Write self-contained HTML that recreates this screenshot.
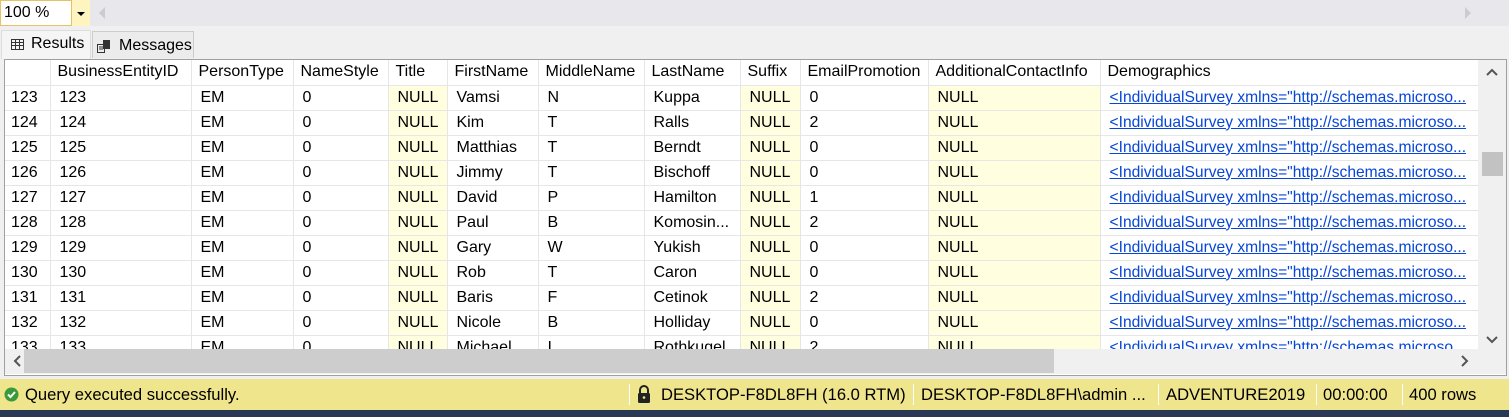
<!DOCTYPE html>
<html><head><meta charset="utf-8"><style>
*{margin:0;padding:0;box-sizing:border-box}
body{width:1509px;height:417px;overflow:hidden;background:#f0f0f0;font-family:"Liberation Sans",sans-serif;font-size:16px;color:#000;position:relative}
.abs{position:absolute}
.top{left:0;top:0;width:1509px;height:26px;background:#e8e8ec}
.combo{left:0;top:0;width:72px;height:26px;background:#fff;border:1px solid #e5c365;padding:3px 0 0 3px;font-size:16px}
.dd{left:72px;top:0;width:18px;height:26px;background:#fdf4bf}
.tab{top:31px;height:27px;border:1px solid #ccc;border-bottom:none;padding:3px 0 0 0;font-size:16px}
.grid{left:4px;top:59px;width:1503px;height:317px;border:1px solid #a0a0a0;background:#fff;overflow:hidden}
table{border-collapse:collapse;position:absolute;left:0;top:0;table-layout:fixed}
td{height:25px;line-height:20px;border-right:1px solid #e6e6e6;border-bottom:1px solid #e6e6e6;padding:1px 0 1px 9px;white-space:nowrap;overflow:hidden;font-size:16px}
td:first-child{padding-left:6px}
tr.h td{padding:1px 0 1px 7px}
.y{background:#ffffe0}
.l{color:#0645d8;text-decoration:underline;text-decoration-color:#0645d8;font-size:15.6px}
.vs{left:1473px;top:0;width:28px;height:289px;background:#f0f0f0}
.hs{left:0;top:289px;width:1501px;height:25px;background:#f0f0f0}
.status{left:0;top:379px;width:1509px;height:31px;background:#efe58c;font-size:16.6px}
.status span{position:absolute;top:6px}
.sep{position:absolute;top:5px;width:1px;height:21px;background:#fff}
.navy{left:0;top:410px;width:1509px;height:7px;background:#293955}
</style></head><body>
<div class="abs top"></div>
<div class="abs combo">100 %</div>
<div class="abs dd"><svg width="18" height="26"><path d="M5 12h8l-4 4z" fill="#000"/></svg></div>
<svg class="abs" style="left:97px;top:6px" width="10" height="14"><path d="M8 1L2 7l6 6z" fill="#ccc"/></svg>
<svg class="abs" style="left:1463px;top:6px" width="10" height="14"><path d="M2 1l6 6-6 6z" fill="#ccc"/></svg>
<div class="abs tab" style="left:1px;width:90px;background:#f5f5f5;top:30px;height:29px;border-color:#ddd">
<svg style="position:absolute;left:9px;top:8px" width="14" height="12"><rect x="0.5" y="0.5" width="12" height="10" fill="none" stroke="#333"/><path d="M0 3.5h13M0 6.5h13M4.5 0v11M8.5 0v11" stroke="#333"/></svg>
<span style="position:absolute;left:29px;top:4px">Results</span></div>
<div class="abs tab" style="left:92px;width:102px;background:#ececec">
<svg style="position:absolute;left:4px;top:8px" width="14" height="13"><rect x="0.5" y="4.5" width="7" height="8" fill="none" stroke="#333"/><rect x="6" y="0" width="7" height="9" fill="#333"/><path d="M2 7h4M2 9h4" stroke="#333"/></svg>
<span style="position:absolute;left:26px;top:5px">Messages</span></div>
<div class="abs grid">
<table>
<colgroup><col style="width:45px"><col style="width:141px"><col style="width:102px"><col style="width:95px"><col style="width:59px"><col style="width:91px"><col style="width:106px"><col style="width:96px"><col style="width:60px"><col style="width:128px"><col style="width:172px"><col style="width:378px"></colgroup>
<tr class="h"><td></td><td>BusinessEntityID</td><td>PersonType</td><td>NameStyle</td><td>Title</td><td>FirstName</td><td>MiddleName</td><td>LastName</td><td>Suffix</td><td>EmailPromotion</td><td>AdditionalContactInfo</td><td>Demographics</td></tr>
<tr><td>123</td><td>123</td><td>EM</td><td>0</td><td class="y">NULL</td><td>Vamsi</td><td>N</td><td>Kuppa</td><td class="y">NULL</td><td>0</td><td class="y">NULL</td><td class="l">&lt;IndividualSurvey xmlns="http://schemas.microso...</td></tr>
<tr><td>124</td><td>124</td><td>EM</td><td>0</td><td class="y">NULL</td><td>Kim</td><td>T</td><td>Ralls</td><td class="y">NULL</td><td>2</td><td class="y">NULL</td><td class="l">&lt;IndividualSurvey xmlns="http://schemas.microso...</td></tr>
<tr><td>125</td><td>125</td><td>EM</td><td>0</td><td class="y">NULL</td><td>Matthias</td><td>T</td><td>Berndt</td><td class="y">NULL</td><td>0</td><td class="y">NULL</td><td class="l">&lt;IndividualSurvey xmlns="http://schemas.microso...</td></tr>
<tr><td>126</td><td>126</td><td>EM</td><td>0</td><td class="y">NULL</td><td>Jimmy</td><td>T</td><td>Bischoff</td><td class="y">NULL</td><td>0</td><td class="y">NULL</td><td class="l">&lt;IndividualSurvey xmlns="http://schemas.microso...</td></tr>
<tr><td>127</td><td>127</td><td>EM</td><td>0</td><td class="y">NULL</td><td>David</td><td>P</td><td>Hamilton</td><td class="y">NULL</td><td>1</td><td class="y">NULL</td><td class="l">&lt;IndividualSurvey xmlns="http://schemas.microso...</td></tr>
<tr><td>128</td><td>128</td><td>EM</td><td>0</td><td class="y">NULL</td><td>Paul</td><td>B</td><td>Komosin...</td><td class="y">NULL</td><td>2</td><td class="y">NULL</td><td class="l">&lt;IndividualSurvey xmlns="http://schemas.microso...</td></tr>
<tr><td>129</td><td>129</td><td>EM</td><td>0</td><td class="y">NULL</td><td>Gary</td><td>W</td><td>Yukish</td><td class="y">NULL</td><td>0</td><td class="y">NULL</td><td class="l">&lt;IndividualSurvey xmlns="http://schemas.microso...</td></tr>
<tr><td>130</td><td>130</td><td>EM</td><td>0</td><td class="y">NULL</td><td>Rob</td><td>T</td><td>Caron</td><td class="y">NULL</td><td>0</td><td class="y">NULL</td><td class="l">&lt;IndividualSurvey xmlns="http://schemas.microso...</td></tr>
<tr><td>131</td><td>131</td><td>EM</td><td>0</td><td class="y">NULL</td><td>Baris</td><td>F</td><td>Cetinok</td><td class="y">NULL</td><td>2</td><td class="y">NULL</td><td class="l">&lt;IndividualSurvey xmlns="http://schemas.microso...</td></tr>
<tr><td>132</td><td>132</td><td>EM</td><td>0</td><td class="y">NULL</td><td>Nicole</td><td>B</td><td>Holliday</td><td class="y">NULL</td><td>0</td><td class="y">NULL</td><td class="l">&lt;IndividualSurvey xmlns="http://schemas.microso...</td></tr>
<tr><td>133</td><td>133</td><td>EM</td><td>0</td><td class="y">NULL</td><td>Michael</td><td>I</td><td>Rothkugel</td><td class="y">NULL</td><td>2</td><td class="y">NULL</td><td class="l">&lt;IndividualSurvey xmlns="http://schemas.microso...</td></tr>
</table>
<div class="abs vs">
<svg style="position:absolute;left:8px;top:8px" width="12" height="8"><path d="M1 7l5-5 5 5" fill="none" stroke="#555" stroke-width="2"/></svg>
<div style="position:absolute;left:4px;top:92px;width:21px;height:24px;background:#c2c2c2"></div>
<svg style="position:absolute;left:8px;top:276px" width="12" height="8"><path d="M1 1l5 5 5-5" fill="none" stroke="#555" stroke-width="2"/></svg>
</div>
<div class="abs hs">
<svg style="position:absolute;left:8px;top:6px" width="8" height="12"><path d="M7 1L2 6l5 5" fill="none" stroke="#555" stroke-width="2"/></svg>
<div style="position:absolute;left:19px;top:0;width:1030px;height:24px;background:#cdcdcd"></div>
<svg style="position:absolute;left:1456px;top:6px" width="8" height="12"><path d="M1 1l5 5-5 5" fill="none" stroke="#555" stroke-width="2"/></svg>
</div>
</div>
<div class="abs status">
<svg style="position:absolute;left:4px;top:8px" width="15" height="15"><circle cx="7.5" cy="7.5" r="7" fill="#3a9a3a"/><path d="M4 7.5l2.5 2.5 4.5-5" fill="none" stroke="#fff" stroke-width="2"/></svg>
<span style="left:25px">Query executed successfully.</span>
<div class="sep" style="left:629px"></div>
<svg style="position:absolute;left:636px;top:5px" width="16" height="20"><path d="M4 9V6a4 4 0 0 1 8 0v3" fill="none" stroke="#222" stroke-width="2"/><rect x="2" y="9" width="12" height="10" rx="1.5" fill="#222"/><circle cx="8" cy="13.5" r="1.3" fill="#efe58c"/></svg>
<span style="left:661px">DESKTOP-F8DL8FH (16.0 RTM)</span>
<div class="sep" style="left:913px"></div>
<span style="left:921px">DESKTOP-F8DL8FH\admin ...</span>
<div class="sep" style="left:1158px"></div>
<span style="left:1166px">ADVENTURE2019</span>
<div class="sep" style="left:1316px"></div>
<span style="left:1323px">00:00:00</span>
<div class="sep" style="left:1402px"></div>
<span style="left:1409px">400 rows</span>
</div>
<div class="abs navy"></div>
</body></html>
